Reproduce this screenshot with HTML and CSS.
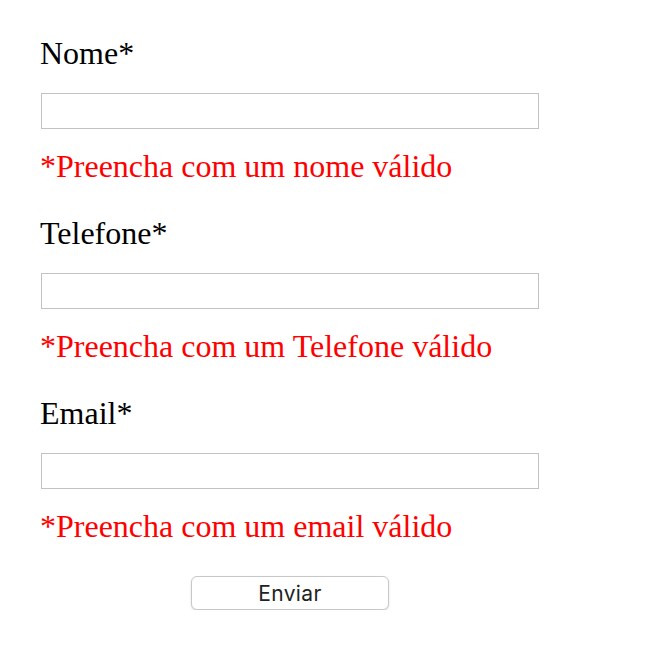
FILE: index.html
```html
<!DOCTYPE html>
<html lang="pt">
<head>
    <meta charset="UTF-8">
    <meta name="viewport" content="width=device-width, initial-scale=1.0">
    <title>Formulário</title>
    <link rel="stylesheet" href="styles.css">
</head>
<body>
    <form class="form" onsubmit="return false;">
        <div class="field">
            <label for="nome">Nome*</label>
            <input type="text" id="nome">
            <span class="error">*Preencha com um nome válido</span>
        </div>
        <div class="field">
            <label for="telefone">Telefone*</label>
            <input type="text" id="telefone">
            <span class="error">*Preencha com um Telefone válido</span>
        </div>
        <div class="field">
            <label for="email">Email*</label>
            <input type="text" id="email">
            <span class="error">*Preencha com um email válido</span>
        </div>
        <div class="actions">
            <button type="submit">Enviar</button>
        </div>
    </form>
</body>
</html>
```

FILE: styles.css
```css
body {
    font-family: 'Liberation Serif', 'Times New Roman', serif;
    background: #fff;
    margin: 0;
    padding: 0;
}

.form {
    width: 500px;
    padding: 35px 0 0 40px;
}

.field {
    display: flex;
    flex-direction: column;
    margin-bottom: 30px;
}

.field:last-of-type {
    margin-bottom: 0;
}

label {
    font-size: 32px;
    line-height: 37px;
    color: #000;
}

input {
    box-sizing: border-box;
    width: 498px;
    height: 36px;
    margin: 21px 0 0 1px;
    border: 1px solid #c2c2c2;
    padding: 4px 8px;
    font-size: 16px;
}

.error {
    margin-top: 19px;
    font-size: 32px;
    line-height: 37px;
    color: #ff0000;
}

.actions {
    display: flex;
    justify-content: center;
    margin-top: 31px;
}

button {
    width: 198px;
    height: 34px;
    font-family: Inter, 'Liberation Sans', Arial, sans-serif;
    font-size: 21px;
    letter-spacing: 0.4px;
    color: #222;
    background: #fff;
    border: 1px solid #c8c8c8;
    border-radius: 6px;
    box-shadow: 0 1px 2px rgba(0, 0, 0, 0.15);
    cursor: pointer;
}
```
